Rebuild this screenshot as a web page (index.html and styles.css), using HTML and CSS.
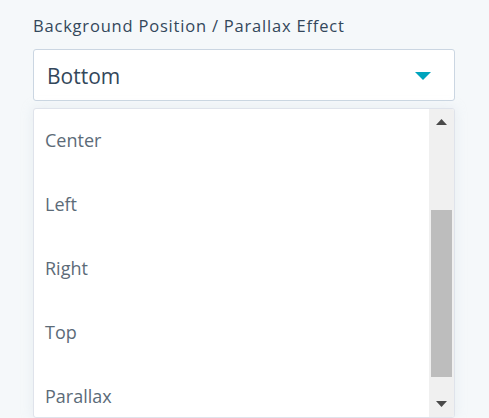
FILE: index.html
```html
<!DOCTYPE html>
<html>
<head>
<meta charset="utf-8">
<link rel="stylesheet" href="styles.css">
</head>
<body>
<div class="field">
  <div class="label">Background Position / Parallax Effect</div>
  <div class="select">
    <span class="value">Bottom</span>
    <svg class="caret" width="16" height="8" viewBox="0 0 16 8"><path d="M0 0H16L8 8Z" fill="#00a4bd"/></svg>
  </div>
  <div class="menu">
    <ul class="options">
      <li>Center</li>
      <li>Left</li>
      <li>Right</li>
      <li>Top</li>
      <li>Parallax</li>
    </ul>
    <div class="scrollbar">
      <svg class="arrow" width="11" height="6" viewBox="0 0 11 6"><path d="M0 6H11L5.5 0Z" fill="#4a4a4a"/></svg>
      <div class="track"><div class="thumb"></div></div>
      <svg class="arrow" width="11" height="6" viewBox="0 0 11 6"><path d="M0 0H11L5.5 6Z" fill="#4a4a4a"/></svg>
    </div>
  </div>
</div>
</body>
</html>
```
FILE: styles.css
```css
html, body {
  margin: 0;
  padding: 0;
  background: #f5f8fa;
  height: 418px;
  overflow: hidden;
}
.field {
  padding: 16px 0 0 33px;
  width: 422px;
  font-family: "Open Sans", Lato, sans-serif;
}
.label {
  font-size: 16.5px;
  color: #33475b;
  line-height: 20px;
  height: 20px;
  margin-bottom: 13px;
  letter-spacing: 0.8px;
}
.select {
  box-sizing: border-box;
  height: 52px;
  border: 1px solid #cbd6e2;
  border-radius: 3px;
  background: #fff;
  display: flex;
  align-items: center;
  justify-content: space-between;
  padding: 0 23px 0 13px;
}
.value {
  font-size: 21px;
  color: #33475b;
  margin-top: 1px;
}
.caret {
  display: block;
  margin-top: 1px;
}
.menu {
  box-sizing: border-box;
  margin-top: 7px;
  height: 310px;
  border: 1px solid #dfe3eb;
  border-radius: 3px;
  background: #fff;
  display: flex;
  overflow: hidden;
  box-shadow: 0 0 12px rgba(203, 214, 226, 0.35);
}
.options {
  list-style: none;
  margin: 0;
  padding: 0;
  flex: 1;
}
.options li {
  height: 64px;
  display: flex;
  align-items: center;
  padding-left: 11px;
  padding-bottom: 2px;
  box-sizing: border-box;
  font-size: 18px;
  color: #5c6b78;
}
.scrollbar {
  width: 25px;
  background: #f0f0f0;
  display: flex;
  flex-direction: column;
  align-items: center;
}
.arrow {
  display: block;
  flex: none;
  margin: 10px 0;
}
.track {
  flex: 1;
  width: 100%;
  position: relative;
}
.thumb {
  position: absolute;
  left: 2px;
  right: 2px;
  top: 75px;
  height: 167px;
  background: #bdbdbd;
}
```
